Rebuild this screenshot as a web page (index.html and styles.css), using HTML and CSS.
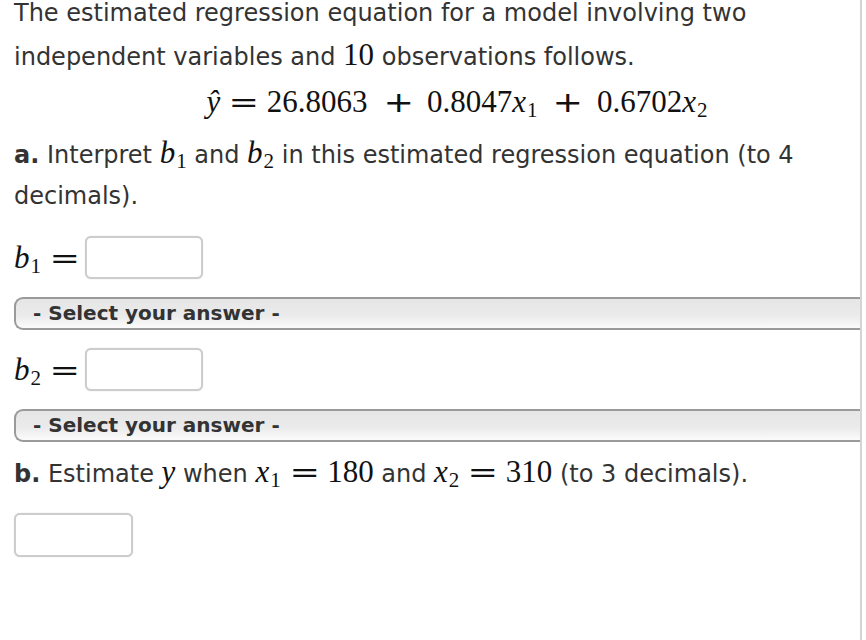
FILE: index.html
```html
<!DOCTYPE html>
<html>
<head>
<meta charset="utf-8">
<link rel="stylesheet" href="styles.css">
</head>
<body>
<div class="page">
  <p class="para">The estimated regression equation for a model involving two independent variables and <span class="m tall">10</span> observations follows.</p>
  <div class="eq"><span class="m"><span class="mi">ŷ</span><span class="op rel">=</span>26.8063<span class="op bin">+</span>0.8047<span class="mi">x</span><sub>1</sub><span class="op bin">+</span>0.6702<span class="mi">x</span><sub>2</sub></span></div>
  <p class="para"><b>a.</b> Interpret <span class="m"><span class="mi">b</span><sub>1</sub></span> and <span class="m"><span class="mi">b</span><sub>2</sub></span> in this estimated regression equation (to 4 decimals).</p>
  <div class="row"><span class="m lead"><span class="mi">b</span><sub>1</sub><span class="op rel">=</span></span><span class="box"></span></div>
  <div class="select">- Select your answer -</div>
  <div class="row"><span class="m lead"><span class="mi">b</span><sub>2</sub><span class="op rel">=</span></span><span class="box"></span></div>
  <div class="select">- Select your answer -</div>
  <p class="para"><b>b.</b> Estimate <span class="m"><span class="mi">y</span></span> when <span class="m"><span class="mi">x</span><sub>1</sub><span class="op rel">=</span>180</span> and <span class="m"><span class="mi">x</span><sub>2</sub><span class="op rel">=</span>310</span> (to 3 decimals).</p>
  <div class="row last"><span class="box"></span></div>
</div>
</body>
</html>
```

FILE: styles.css
```css
html, body {
  margin: 0;
  padding: 0;
  background: #fff;
}
.page {
  width: 846px;
  height: 647px;
  margin-top: -7px;
  padding-left: 14px;
  border-right: 2px solid #d4d4d4;
  overflow: hidden;
  font-family: "DejaVu Sans", Verdana, sans-serif;
  font-size: 24px;
  line-height: 41px;
  color: #333;
}
.para {
  margin: 0;
  padding-right: 20px;
}
.m {
  font-family: "Liberation Serif", "Times New Roman", serif;
  font-size: 31px;
  line-height: 1;
  color: #111;
  white-space: nowrap;
}
.m.tall { line-height: 42px; }
.mi { font-style: italic; }
.m sub {
  font-size: 21px;
  vertical-align: -5px;
  line-height: 0;
  margin-left: 1px;
}
.op {
  display: inline-block;
  font-family: "DejaVu Sans", sans-serif;
  font-size: 28px;
  font-weight: normal;
  transform: scaleX(1.3);
}
.rel { margin: 0 11px 0 12px; }
.bin { margin: 0 17px 0 19px; }
.eq {
  text-align: center;
  line-height: 47px;
  padding: 3px 0 7px 40px;
}
.row {
  display: flex;
  align-items: center;
  margin-top: 19px;
  height: 43px;
}
.lead { margin-right: -2px; }
.box {
  display: inline-block;
  box-sizing: border-box;
  width: 118px;
  height: 43px;
  border: 2px solid #cdcdcd;
  border-radius: 6px;
  background: #fff;
  box-shadow: 0 0 1px #c4c4c4;
}
.row.last { margin-top: 18px; height: 44px; }
.row.last .box { height: 44px; width: 119px; }
.select {
  box-sizing: border-box;
  width: 900px;
  height: 33px;
  margin: 18px 0 0 0;
  border: 2px solid #9a9a9a;
  border-right: none;
  border-radius: 9px 0 0 9px;
  background: linear-gradient(#e6e6e6 0%, #eaeaea 55%, #fbfbfb 100%);
  font-weight: bold;
  font-size: 20px;
  line-height: 29px;
  padding-left: 17px;
  color: #333;
}
.select + .row { margin-top: 18px; }
.select + .para { margin-top: 12px; }
```
